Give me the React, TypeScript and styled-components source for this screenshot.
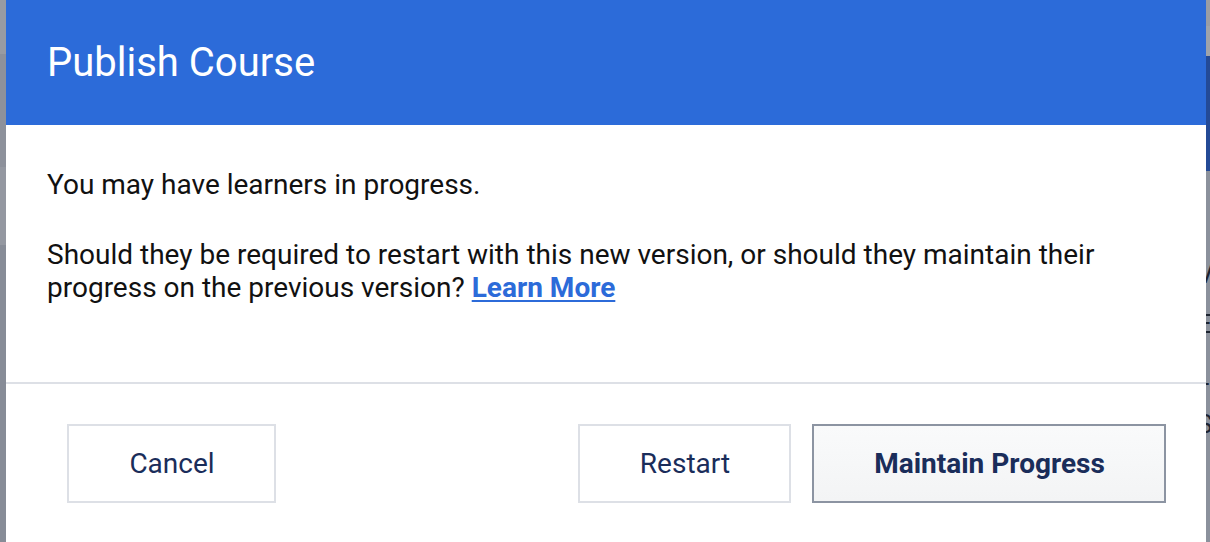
import React from "react";
import styled, { createGlobalStyle } from "styled-components";

const Global = createGlobalStyle`
  html, body { margin: 0; padding: 0; }
  body { background: #8b909b; font-family: Roboto, "Liberation Sans", sans-serif; overflow: hidden; }
`;

const Page = styled.div`
  display: flex;
  width: 1210px;
  height: 542px;
  overflow: hidden;
`;

const LeftEdge = styled.div`
  width: 6px;
  flex: none;
  display: flex;
  flex-direction: column;
  background: #878c97;
`;

const EdgeBlock = styled.div<{ $h: number; $bg: string }>`
  height: ${(p) => p.$h}px;
  flex: none;
  background: ${(p) => p.$bg};
`;

const RightEdge = styled.div`
  width: 4px;
  flex: none;
  display: flex;
  flex-direction: column;
  background: #8b919c;
  overflow: hidden;
`;

const EdgeGlyphs = styled.div`
  font-family: Roboto, sans-serif;
  font-size: 26px;
  color: #1c2330;
  line-height: 50px;
  margin-left: -9px;
  margin-top: 78px;
  white-space: nowrap;
`;

const Modal = styled.div`
  width: 1200px;
  flex: none;
  background: #ffffff;
  display: flex;
  flex-direction: column;
`;

const Header = styled.div`
  height: 125px;
  background: #2c6bd9;
  display: flex;
  align-items: center;
  padding-left: 41px;
`;

const Title = styled.h1`
  margin: 0;
  font-size: 40px;
  font-weight: 400;
  color: #ffffff;
`;

const Body = styled.div`
  padding: 43px 41px 78px;
  border-bottom: 2px solid #dde0e6;
  color: #111111;
  font-size: 28px;
  line-height: 33px;
`;

const Para = styled.p`
  margin: 0 0 37px;
  &:last-child { margin-bottom: 0; }
`;

const Link = styled.a`
  color: #2c6bd9;
  font-weight: 700;
  text-decoration: underline;
  text-decoration-thickness: 2px;
  text-underline-offset: 3px;
`;

const Footer = styled.div`
  display: flex;
  align-items: center;
  padding: 40px 40px 0 61px;
  gap: 21px;
`;

const Spacer = styled.div`
  flex: 1;
`;

const Button = styled.button<{ $w: number; $primary?: boolean }>`
  width: ${(p) => p.$w}px;
  height: 79px;
  box-sizing: border-box;
  border: 2px solid ${(p) => (p.$primary ? "#8c94a2" : "#dde0e6")};
  background: ${(p) => (p.$primary ? "linear-gradient(#f9fafb, #f3f4f5)" : "#ffffff")};
  color: #1a2d5a;
  font-family: Roboto, "Liberation Sans", sans-serif;
  font-size: 28px;
  font-weight: ${(p) => (p.$primary ? 700 : 400)};
  padding: 0 0 0 1px;
  cursor: pointer;
`;

export default function App() {
  return (
    <Page>
      <Global />
      <LeftEdge>
        <EdgeBlock $h={54} $bg="#989ba2" />
        <EdgeBlock $h={113} $bg="#8d919b" />
        <EdgeBlock $h={78} $bg="#9498a1" />
      </LeftEdge>
      <Modal>
        <Header>
          <Title>Publish Course</Title>
        </Header>
        <Body>
          <Para>You may have learners in progress.</Para>
          <Para>
            Should they be required to restart with this new version, or should they maintain their
            progress on the previous version? <Link href="#">Learn More</Link>
          </Para>
        </Body>
        <Footer>
          <Button $w={209}>Cancel</Button>
          <Spacer />
          <Button $w={213}>Restart</Button>
          <Button $w={354} $primary>
            Maintain Progress
          </Button>
        </Footer>
      </Modal>
      <RightEdge>
        <EdgeBlock $h={26} $bg="#9a9da4" />
        <EdgeBlock $h={30} $bg="#9fa3aa" />
        <EdgeBlock $h={115} $bg="#244a96" />
        <EdgeGlyphs>
          V<br />E<br />_<br />S
        </EdgeGlyphs>
      </RightEdge>
    </Page>
  );
}
